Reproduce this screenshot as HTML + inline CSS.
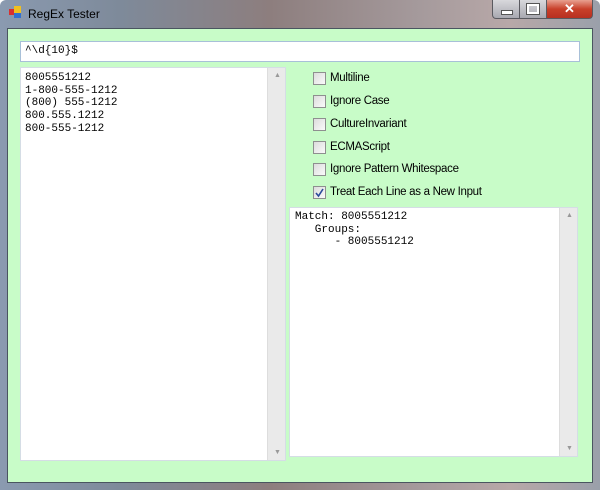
<!DOCTYPE html>
<html><head><style>
body{margin:0;width:600px;height:490px;overflow:hidden;font-family:"Liberation Sans",sans-serif;}
.win{position:absolute;left:0;top:0;width:600px;height:490px;background:linear-gradient(90deg,#8a9ab0 0%,#7e8a9a 20%,#8d7e7e 45%,#a59a9c 70%,#b8a8a8 85%,#9aa0aa 100%);border-radius:6px 6px 0 0;}
.client{position:absolute;left:7px;top:28px;width:584px;height:453px;background:#c8fcc8;border:1px solid #4a5560;}
.mono{font-family:"Liberation Mono","DejaVu Sans Mono",monospace;font-size:11px;line-height:12.7px;color:#000;}
.box{position:absolute;background:#fff;border:1px solid #d5dde5;}
.sb{position:absolute;top:0;right:0;width:17px;bottom:0;background:#eaeaea;border-left:1px solid #ddd;}
.cb{position:absolute;left:313px;width:11px;height:11px;border:1px solid #8e8f8f;background:linear-gradient(135deg,#dcdcdc,#fafafa);}
.lbl{position:absolute;left:330px;font-size:11.5px;line-height:13px;color:#000;letter-spacing:-0.3px;}
.btn{position:absolute;top:0;height:18px;border:1px solid #5a5a60;border-top:none;}
</style></head><body>
<div class="win">
 <div style="position:absolute;left:9px;top:9px;width:6px;height:6px;background:#d83030"></div>
 <div style="position:absolute;left:14px;top:6px;width:7px;height:7px;background:#f0c020"></div>
 <div style="position:absolute;left:14px;top:13px;width:7px;height:5px;background:#3070d0"></div>
 <div style="position:absolute;left:28px;top:7px;font-size:12px;color:#000;">RegEx Tester</div>
 <div class="btn" style="left:492px;width:27px;background:linear-gradient(#d8d8dc,#a8a8b0);border-radius:0 0 0 4px"><div style="position:absolute;left:8px;top:10px;width:10px;height:3px;background:#fff;border:1px solid #555"></div></div>
 <div class="btn" style="left:519px;width:26px;background:linear-gradient(#d8d8dc,#a8a8b0)"><div style="position:absolute;left:7px;top:4px;width:8px;height:6px;border:2px solid #fff;outline:1px solid #555"></div></div>
 <div class="btn" style="left:546px;width:45px;background:linear-gradient(#e8a090,#c8402a 50%,#b83020);border-radius:0 0 4px 0;color:#fff;font-weight:bold;font-size:13px;text-align:center;line-height:17px">✕</div>
 <div class="client">
  <div class="box" style="left:12px;top:12px;width:558px;height:19px;border-color:#a8c0d8"><div class="mono" style="position:absolute;left:4px;top:3px">^\d{10}$</div></div>
  <div class="box" style="left:12px;top:38px;width:264px;height:392px"><div class="mono" style="position:absolute;left:4px;top:4px">8005551212<br>1-800-555-1212<br>(800) 555-1212<br>800.555.1212<br>800-555-1212</div><div class="sb"><div style="position:absolute;left:6px;top:4px;font-size:7px;color:#999">▲</div><div style="position:absolute;left:6px;bottom:4px;font-size:7px;color:#999">▼</div></div></div>
  <div class="box" style="left:281px;top:178px;width:287px;height:248px"><div class="mono" style="position:absolute;left:5px;top:3px">Match: 8005551212<br>&nbsp;&nbsp;&nbsp;Groups:<br>&nbsp;&nbsp;&nbsp;&nbsp;&nbsp;&nbsp;- 8005551212</div><div class="sb"><div style="position:absolute;left:6px;top:4px;font-size:7px;color:#999">▲</div><div style="position:absolute;left:6px;bottom:4px;font-size:7px;color:#999">▼</div></div></div>
 </div>
 <div class="cb" style="top:72px"></div><div class="lbl" style="top:72px">Multiline</div>
 <div class="cb" style="top:95px"></div><div class="lbl" style="top:95px">Ignore Case</div>
 <div class="cb" style="top:118px"></div><div class="lbl" style="top:118px">CultureInvariant</div>
 <div class="cb" style="top:141px"></div><div class="lbl" style="top:141px">ECMAScript</div>
 <div class="cb" style="top:163px"></div><div class="lbl" style="top:163px">Ignore Pattern Whitespace</div>
 <div class="cb" style="top:186px"><svg width="11" height="11" style="position:absolute;left:0;top:0"><path d="M2 6 L4.5 9 L9 2" stroke="#2a4a9a" stroke-width="1.6" fill="none"/></svg></div><div class="lbl" style="top:186px">Treat Each Line as a New Input</div>
</div>
</body></html>
